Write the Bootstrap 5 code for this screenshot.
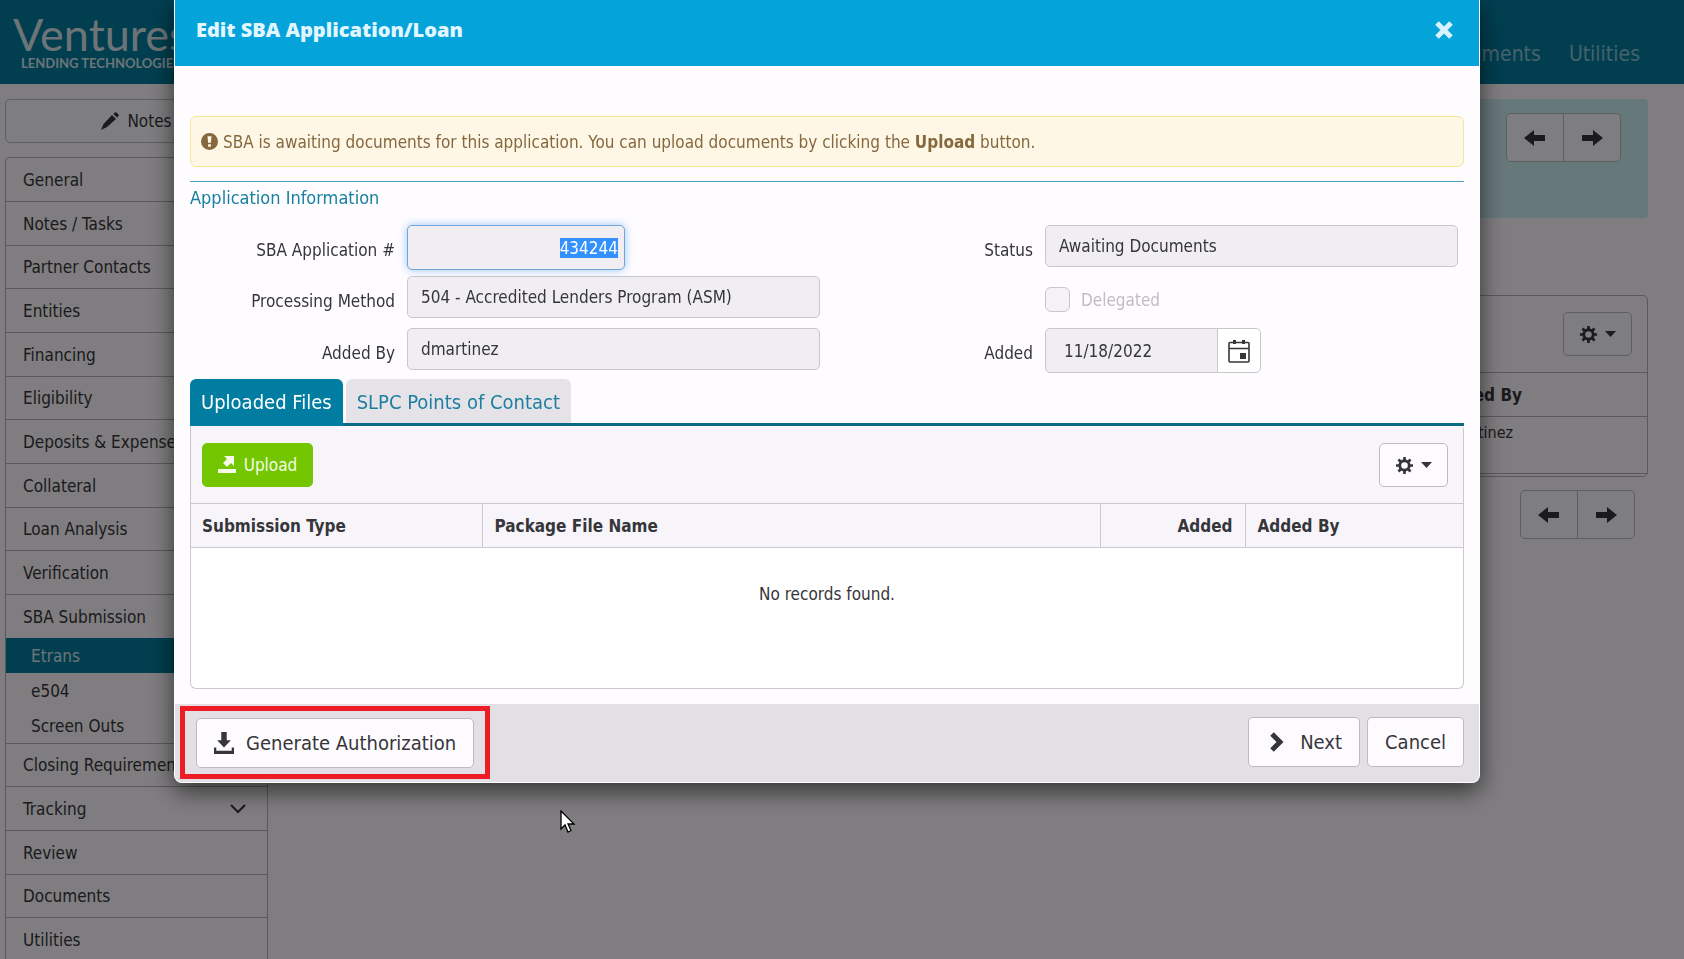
<!DOCTYPE html>
<html lang="en">
<head>
<meta charset="utf-8">
<meta name="viewport" content="width=device-width, initial-scale=1">
<title>Edit SBA Application/Loan</title>
<link href="https://cdn.jsdelivr.net/npm/bootstrap@5.3.0/dist/css/bootstrap.min.css" rel="stylesheet">
<style>
  :root { --teal: #007da0; --line: #cbc9ce; --ink: #36363a; }
  html, body { height: 100%; }
  body {
    font-family: "DejaVu Sans Condensed", "DejaVu Sans", sans-serif;
    font-size: 17px; line-height: 24px; color: var(--ink);
    background: #fefbfe; overflow: hidden;
  }
  svg { display: block; fill: currentColor; }
  .btn { --bs-btn-font-size: 17px; --bs-btn-line-height: 24px; --bs-btn-color: var(--ink);
    --bs-btn-bg: #fdfbfe; --bs-btn-border-color: #bdbbc0; --bs-btn-border-radius: 5px; }

  /* page behind the dialog */
  .topbar { background: var(--teal); height: 84px; padding: 0 44px 0 13px; }
  .brand { font-family: Lato, sans-serif; color: #dbe9ee; }
  .brand-name { font-size: 45px; line-height: 44px; }
  .brand-sub { font-size: 13px; line-height: 14px; font-weight: 700; margin-left: 8px; }
  .topbar .nav-link { color: #8cc4d6; font-size: 21px; line-height: 28px; padding: 23px 0 0; }
  .sidebar { width: 263px; flex: none; margin: 0 16px 0 5px; }
  .side-notes { height: 44px; margin: 15px 0 14px; }
  .side-list { border: 1px solid #b4b1b6; border-radius: 4px 4px 0 0; background: #fefbfe; }
  .side-list > li { border-bottom: 1px solid #b4b1b6; }
  .side-link { display: flex; align-items: center; justify-content: space-between; height: 43px;
    padding: 0 20px 0 17px; color: var(--ink); text-decoration: none; }
  .side-list > li:nth-child(3n) > .side-link { height: 42px; }
  .side-sub .side-link { height: 35px; padding-left: 25px; }
  .side-sub .side-link.active { background: var(--teal); color: #dbe9ee; }
  .content-col { margin-right: 36px; }
  .summary { background: #cff0f5; border-radius: 4px; height: 119px; padding: 14px 27px; margin: 15px 0 77px; }
  .arrow-btn { width: 58px; height: 49px; padding: 0; }
  .grid-card { border: 1px solid #b4b1b6; border-radius: 5px; }
  .grid-card .grid-tools { height: 76px; padding: 16px 15px 0; }
  .grid-card table { table-layout: fixed; }
  .grid-card th { height: 44px; border-top: 1px solid #b4b1b6; border-bottom: 1px solid #b4b1b6; }
  .grid-card td { height: 57px; padding-top: 4px; vertical-align: top; border-bottom: 1px solid #b4b1b6; font-size: 16px; }
  .grid-card th:last-child, .grid-card td:last-child { width: 208px; }
  .card-foot { height: 2px; }
  .gear-btn { width: 69px; height: 44px; gap: 8px; padding: 0; }
  .pager { margin: 13px 13px 0 0; }

  /* dialog */
  .edit-dialog { max-width: none; margin: 0 204px 0 174px; }
  .edit-dialog .modal-content { background: #fefcff; color: var(--ink); border: 1px solid #fff; border-top: 0;
    border-radius: 0 0 8px 8px; box-shadow: 0 8px 24px rgba(0, 0, 0, .6); }
  .edit-dialog .modal-header { background: #04a4da; border: 0; border-radius: 0; height: 66px; padding: 0 25px 6px 21px; }
  .edit-dialog .modal-title { font-family: "Open Sans", sans-serif; font-size: 20px; line-height: 28px; font-weight: 800; color: #e2f6ff; }
  .close-btn { border: 0; background: none; color: #d8f3ff; padding: 0; }
  .edit-dialog .modal-body { padding: 50px 15px 15px; }
  .notice { background: #fff7e6; border: 1px solid #f3e79a; color: #86683e; border-radius: 6px;
    height: 51px; padding: 0 10px; gap: 5px; margin-bottom: 14px; }
  .section-title { border-top: 1px solid #4f9cbb; color: #17809f; font-size: 18px; line-height: 24px; padding-top: 4px; margin: 0; }
  .form-area { padding: 15px 6px 8px 0; }
  .lbl-left, .lbl-right { padding: 13px 12px 0 0; text-align: right; }
  .lbl-left { width: 217px; }
  .lbl-right { width: 225px; }
  .form-area .form-control { background: #f0eef3; border: 1px solid #c8c6cb; border-radius: 5px; height: 42px;
    padding: 0 13px; font-size: 17px; color: var(--ink); }
  .fld { width: 413px; }
  .fld-num { width: 218px; }
  .form-area .fld-num .form-control { height: 45px; text-align: right; padding: 0 6px; border-color: #6ea6dd;
    box-shadow: 0 0 8px rgba(90, 160, 240, .6); }
  .fld-num .form-control::selection { background: #3390ff; color: #fff; }
  .fld-date { width: 216px; }
  .form-area .fld-date .form-control { height: 45px; padding: 0 18px; }
  .fld-date .btn { width: 44px; padding: 0; border-color: #c8c6cb; background: #fff; }
  .form-area .form-check-input { width: 25px; height: 25px; margin: 0; border-color: #c8c6cb; background: #f4f2f6; border-radius: 6px; opacity: 1; }
  .form-area .delegated label { opacity: 1; }
  .delegated { gap: 11px; color: #bfbdc2; padding-top: 11px; }
  .row-a { height: 51px; }
  .row-b { height: 52px; }
  .row-c { height: 43px; }
  .file-tabs { border-bottom: 3px solid #0b6a84; gap: 3px; }
  .file-tabs .nav-link { border: 0; border-radius: 6px 6px 0 0; height: 44px; padding: 2px 11px 0; font-size: 20px;
    background: #e5e3e7; color: #1c7fa0; }
  .file-tabs .nav-link.active { background: var(--teal); color: #fff; margin-bottom: -3px; height: 47px; padding-bottom: 3px; }
  .files-panel { border: 1px solid var(--line); border-top: 0; border-radius: 0 4px 6px 6px; background: #fff; overflow: hidden; }
  .files-tools { background: #f7f5fa; height: 77px; padding: 17px 15px 0 11px; }
  .upload-btn { --bs-btn-bg: #73c600; --bs-btn-border-color: #73c600; --bs-btn-color: #f4fbe8; width: 111px; height: 44px; gap: 8px; padding: 0; }
  .files-table { table-layout: fixed; width: 100%; }
  .files-table th { background: #f7f5fa; border: 1px solid var(--line); height: 44px; padding: 0 12px; }
  .files-table th:first-child { border-left: 0; padding-left: 11px; }
  .files-table th:last-child { border-right: 0; }
  .files-table td { height: 140px; padding: 34px 0 0; vertical-align: top; text-align: center; }
  .col-type { width: 291px; }
  .col-added { width: 145px; }
  .col-by { width: 218px; }
  .edit-dialog .modal-footer { background: #e2e0e5; border: 0; padding: 2px 15px 3px 5px; gap: 7px; border-radius: 0 0 7px 7px; flex-wrap: nowrap; }
  .edit-dialog .modal-footer > * { margin: 0; }
  .edit-dialog .modal-footer .btn { height: 50px; font-size: 20px; padding: 0 17px; }
  .callout-box { border: 5px solid #ee1c25; padding: 7px 11px 6px; }
  .pointer { position: absolute; left: 560px; top: 810px; z-index: 1060; }
</style>
</head>
<body>
<svg width="0" height="0" class="position-absolute" aria-hidden="true">
  <defs>
    <path id="i-left" d="M10 1v5h11v6H10v5L0 9z"/>
    <path id="i-right" d="M12 1v5H1v6h11v5L22 9z"/>
    <g id="i-gear" fill="none" stroke="currentColor">
      <circle cx="9" cy="9" r="5" stroke-width="3"/>
      <path d="M9 0v4M9 14v4M0 9h4M14 9h4M2.600 2.600l3 3M12.400 12.400l3 3M2.600 15.400l3-3M12.400 5.600l3-3" stroke-width="2.800"/>
    </g>
  </defs>
</svg>

<header class="topbar d-flex justify-content-between">
  <a class="brand text-decoration-none d-block pt-2 mt-1" href="#">
    <div class="brand-name">Ventures</div>
    <div class="brand-sub">LENDING TECHNOLOGIES</div>
  </a>
  <nav class="nav align-items-center gap-4">
    <a class="nav-link" href="#">Documents</a>
    <a class="nav-link ms-1" href="#">Utilities</a>
  </nav>
</header>

<main class="d-flex">
  <aside class="sidebar">
    <button class="btn side-notes w-100 d-flex align-items-center justify-content-center gap-2" type="button">
      <svg width="18" height="18" viewBox="0 0 18 18"><path d="M11 3l4 4-9 8-6 3 2.500-6zM12.500 2L14 .5c.4-.4 1-.4 1.400 0l2.100 2.100c.4.4.4 1 0 1.400L16 5.500z"/></svg>
      Notes
    </button>
    <ul class="side-list list-unstyled mb-0">
      <li><a class="side-link" href="#">General</a></li>
      <li><a class="side-link" href="#">Notes / Tasks</a></li>
      <li><a class="side-link" href="#">Partner Contacts</a></li>
      <li><a class="side-link" href="#">Entities</a></li>
      <li><a class="side-link" href="#">Financing</a></li>
      <li><a class="side-link" href="#">Eligibility</a></li>
      <li><a class="side-link" href="#">Deposits &amp; Expenses</a></li>
      <li><a class="side-link" href="#">Collateral</a></li>
      <li><a class="side-link" href="#">Loan Analysis</a></li>
      <li><a class="side-link" href="#">Verification</a></li>
      <li><a class="side-link" href="#">SBA Submission</a>
        <ul class="side-sub list-unstyled mb-0">
          <li><a class="side-link active" href="#">Etrans</a></li>
          <li><a class="side-link" href="#">e504</a></li>
          <li><a class="side-link" href="#">Screen Outs</a></li>
        </ul>
      </li>
      <li><a class="side-link" href="#">Closing Requirements</a></li>
      <li><a class="side-link" href="#">Tracking
        <svg width="18" height="12" viewBox="0 0 18 12"><path d="M2 2l7 7 7-7" fill="none" stroke="currentColor" stroke-width="2"/></svg></a></li>
      <li><a class="side-link" href="#">Review</a></li>
      <li><a class="side-link" href="#">Documents</a></li>
      <li><a class="side-link" href="#">Utilities</a></li>
    </ul>
  </aside>

  <section class="content-col flex-grow-1">
    <div class="summary d-flex justify-content-end align-items-start">
      <div class="btn-group">
        <button class="btn arrow-btn d-flex align-items-center justify-content-center" type="button" aria-label="Previous"><svg width="22" height="18"><use href="#i-left"/></svg></button>
        <button class="btn arrow-btn d-flex align-items-center justify-content-center" type="button" aria-label="Next record"><svg width="22" height="18"><use href="#i-right"/></svg></button>
      </div>
    </div>
    <div class="grid-card">
      <div class="grid-tools d-flex justify-content-end align-items-start">
        <button class="btn gear-btn d-flex align-items-center justify-content-center" type="button" aria-label="Options">
          <svg width="17" height="17" viewBox="0 0 18 18"><use href="#i-gear"/></svg><svg width="11" height="6" viewBox="0 0 11 6"><path d="M0 0h11L5.500 6z"/></svg>
        </button>
      </div>
      <table class="w-100">
        <thead><tr><th></th><th>Added By</th></tr></thead>
        <tbody><tr><td></td><td>dmartinez</td></tr></tbody>
      </table>
      <div class="card-foot"></div>
    </div>
    <div class="pager d-flex justify-content-end">
      <div class="btn-group">
        <button class="btn arrow-btn d-flex align-items-center justify-content-center" type="button" aria-label="Previous"><svg width="22" height="18"><use href="#i-left"/></svg></button>
        <button class="btn arrow-btn d-flex align-items-center justify-content-center" type="button" aria-label="Next record"><svg width="22" height="18"><use href="#i-right"/></svg></button>
      </div>
    </div>
  </section>
</main>

<div class="modal-backdrop show"></div>

<div class="modal d-block" tabindex="-1" role="dialog" aria-labelledby="dlgTitle">
  <div class="modal-dialog edit-dialog">
    <div class="modal-content">
      <div class="modal-header">
        <h1 class="modal-title" id="dlgTitle">Edit SBA Application/Loan</h1>
        <button class="close-btn" type="button" aria-label="Close">
          <svg width="20" height="20" viewBox="0 0 20 20"><path d="M3 3l14 14M17 3L3 17" fill="none" stroke="currentColor" stroke-width="5"/></svg>
        </button>
      </div>

      <div class="modal-body">
        <div class="notice d-flex align-items-center" role="alert">
          <svg width="17" height="17" viewBox="0 0 18 18"><path fill-rule="evenodd" d="M9 0a9 9 0 1 1 0 18A9 9 0 0 1 9 0zM6.900 3.500l.6 6.800h3l.6-6.800zM7.500 11.800v2.700h3v-2.700z"/></svg>
          <div>SBA is awaiting documents for this application. You can upload documents by clicking the <b>Upload</b> button.</div>
        </div>
        <h2 class="section-title">Application Information</h2>

        <form class="form-area d-flex justify-content-between">
          <div>
            <div class="row-a d-flex">
              <label class="lbl-left" for="appNo">SBA Application #</label>
              <div class="fld-num"><input class="form-control" id="appNo" type="text" value="434244" readonly></div>
            </div>
            <div class="row-b d-flex">
              <label class="lbl-left" for="method">Processing Method</label>
              <div class="fld"><input class="form-control" id="method" type="text" value="504 - Accredited Lenders Program (ASM)" readonly></div>
            </div>
            <div class="row-c d-flex">
              <label class="lbl-left" for="addedBy">Added By</label>
              <div class="fld"><input class="form-control" id="addedBy" type="text" value="dmartinez" readonly></div>
            </div>
          </div>
          <div>
            <div class="row-a d-flex">
              <label class="lbl-right" for="status">Status</label>
              <div class="fld"><input class="form-control" id="status" type="text" value="Awaiting Documents" readonly></div>
            </div>
            <div class="row-b d-flex">
              <div class="lbl-right"></div>
              <div class="delegated d-flex align-items-center align-self-start">
                <input class="form-check-input" id="delegated" type="checkbox" disabled>
                <label for="delegated">Delegated</label>
              </div>
            </div>
            <div class="row-c d-flex">
              <label class="lbl-right" for="added">Added</label>
              <div class="input-group fld-date">
                <input class="form-control" id="added" type="text" value="11/18/2022" readonly>
                <button class="btn d-flex align-items-center justify-content-center" type="button" aria-label="Pick a date">
                  <svg width="22" height="24" viewBox="0 0 22 24"><path d="M2 3.500h18q1 0 1 1V22q0 1-1 1H2q-1 0-1-1V4.500q0-1 1-1zM1 9.500h20" fill="none" stroke="currentColor" stroke-width="1.600"/><path d="M5 1h3v4H5zM14 1h3v4h-3zM12 14h6v6h-6z"/></svg>
                </button>
              </div>
            </div>
          </div>
        </form>

        <ul class="nav file-tabs" role="tablist">
          <li role="presentation"><button class="nav-link active" type="button" role="tab">Uploaded Files</button></li>
          <li role="presentation"><button class="nav-link" type="button" role="tab">SLPC Points of Contact</button></li>
        </ul>

        <div class="files-panel">
          <div class="files-tools d-flex justify-content-between align-items-start">
            <button class="btn upload-btn d-flex align-items-center justify-content-center" type="button">
              <svg width="18" height="18" viewBox="0 0 18 18"><path d="M0 13h18v4H0zM6 0h10v10l-3-3-4 4-4-4 4-4z"/></svg>
              Upload
            </button>
            <button class="btn gear-btn d-flex align-items-center justify-content-center" type="button" aria-label="Options">
              <svg width="17" height="17" viewBox="0 0 18 18"><use href="#i-gear"/></svg><svg width="11" height="6" viewBox="0 0 11 6"><path d="M0 0h11L5.500 6z"/></svg>
            </button>
          </div>
          <table class="files-table">
            <colgroup><col class="col-type"><col><col class="col-added"><col class="col-by"></colgroup>
            <thead><tr><th>Submission Type</th><th>Package File Name</th><th class="text-end">Added</th><th>Added By</th></tr></thead>
            <tbody><tr><td colspan="4">No records found.</td></tr></tbody>
          </table>
        </div>
      </div>

      <div class="modal-footer">
        <div class="callout-box me-auto">
          <button class="btn d-flex align-items-center gap-2" type="button">
            <svg class="me-1" width="20" height="22" viewBox="0 0 22 24"><path d="M8 0h6v9h4.500L11 17 3.500 9H8zM0 17h2.500v3.500h17V17H22v7H0z"/></svg>
            Generate Authorization
          </button>
        </div>
        <button class="btn d-flex align-items-center gap-3" type="button">
          <svg class="ms-1" width="14" height="20" viewBox="0 0 14 20"><path d="M2 2l8 8-8 8" fill="none" stroke="currentColor" stroke-width="5"/></svg>
          Next
        </button>
        <button class="btn" type="button">Cancel</button>
      </div>
    </div>
  </div>
</div>

<svg class="pointer" width="16" height="24" viewBox="0 0 16 24"><path d="M1 1v18l4-4 3 7 3-1.500-3-6.500h6z" fill="#fff" stroke="#000" stroke-width="1.300"/></svg>

<script src="https://cdn.jsdelivr.net/npm/bootstrap@5.3.0/dist/js/bootstrap.bundle.min.js"></script>
<script>
  const appNo = document.getElementById('appNo');
  appNo.focus();
  appNo.select();
</script>
</body>
</html>
